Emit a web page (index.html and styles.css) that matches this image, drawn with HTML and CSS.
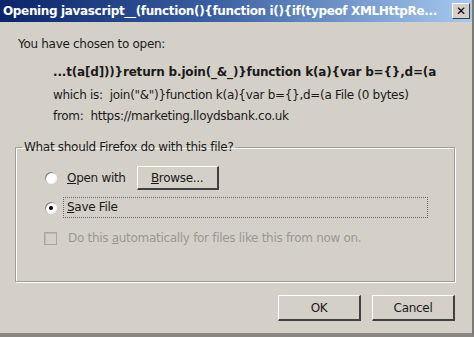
FILE: index.html
```html
<!DOCTYPE html>
<html>
<head>
<meta charset="utf-8">
<link rel="stylesheet" href="styles.css">
</head>
<body>
<div class="window">
  <div class="titlebar">
    <span class="title">Opening javascript__(function(){function i(){if(typeof XMLHttpRe...</span>
    <span class="close">✕</span>
  </div>
  <div class="content">
    <div class="intro">You have chosen to open:</div>
    <div class="fileinfo">
      <div class="filename">...t(a[d]))}return b.join(_&amp;_)}function k(a){var b={},d=(a</div>
      <div class="meta">which is:&nbsp; join("&amp;")}function k(a){var b={},d=(a File (0 bytes)</div>
      <div class="meta">from:&nbsp; https://marketing.lloydsbank.co.uk</div>
    </div>
    <fieldset class="group">
      <legend>What should Firefox do with this file?</legend>
      <div class="option">
        <span class="radio"></span>
        <span class="label"><u>O</u>pen with</span>
        <span class="btn browse"><u>B</u>rowse...</span>
      </div>
      <div class="option">
        <span class="radio checked"></span>
        <span class="label focus"><u>S</u>ave File</span>
      </div>
      <div class="option auto">
        <span class="check"></span>
        <span class="label disabled">Do this <u>a</u>utomatically for files like this from now on.</span>
      </div>
    </fieldset>
    <div class="actions">
      <span class="btn">OK</span>
      <span class="btn">Cancel</span>
    </div>
  </div>
</div>
</body>
</html>
```

FILE: styles.css
```css
html, body {
  margin: 0;
  padding: 0;
  background: #d4d0c8;
}
.window {
  width: 472px;
  height: 333px;
  background: #d4d0c8;
  border-right: 2px solid #7c7a76;
  border-bottom: 4px solid #8a8783;
  font-family: "DejaVu Sans", sans-serif;
  font-size: 12px;
  letter-spacing: -0.3px;
  color: #1a1a1a;
  display: flex;
  flex-direction: column;
}
.titlebar {
  height: 22px;
  background: linear-gradient(to right, #0a246a, #3a5fa0 45%, #a6caf0);
  display: flex;
  align-items: center;
  padding: 0 2px 0 3px;
  gap: 6px;
}
.title {
  flex: 1;
  min-width: 0;
  overflow: hidden;
  color: #fff;
  font-weight: bold;
  font-size: 12px;
  letter-spacing: -0.35px;
  white-space: nowrap;
}
.close {
  flex: none;
  width: 16px;
  height: 14px;
  background: #d4d0c8;
  border-top: 1px solid #fff;
  border-left: 1px solid #fff;
  border-right: 1px solid #404040;
  border-bottom: 1px solid #404040;
  display: flex;
  align-items: center;
  justify-content: center;
  font-size: 12px;
  font-weight: bold;
  color: #000;
  letter-spacing: 0;
}
.content {
  padding: 14px 17px 0 15px;
  display: flex;
  flex-direction: column;
}
.intro {
  padding-left: 3px;
  line-height: 16px;
}
.fileinfo {
  padding-left: 38px;
  margin-top: 12px;
}
.filename {
  font-weight: bold;
  font-size: 12px;
  line-height: 16px;
  letter-spacing: -0.18px;
  white-space: nowrap;
}
.meta {
  line-height: 21px;
  white-space: nowrap;
}
.filename + .meta {
  margin-top: 5px;
}
.group {
  margin: 13px 0 0 0;
  padding: 12px 0 12px 0;
  border: 1px solid #a09d98;
  box-shadow: 1px 1px 0 #fff, inset 1px 1px 0 #fff;
  height: 142px;
  box-sizing: border-box;
}
.group legend {
  padding: 0 2px;
  margin-left: 6px;
  line-height: 14px;
}
.option {
  display: flex;
  align-items: center;
  padding-left: 29px;
}
.option + .option {
  margin-top: 7px;
}
.radio {
  width: 12px;
  height: 12px;
  border-radius: 50%;
  background: #fff;
  box-shadow: inset 1px 1px 0 #808080, inset -1px -1px 0 #f0f0f0;
  position: relative;
  flex: none;
}
.radio.checked::after {
  content: "";
  position: absolute;
  left: 4px;
  top: 4px;
  width: 4px;
  height: 4px;
  border-radius: 50%;
  background: #000;
}
.label {
  margin-left: 8px;
  line-height: 17px;
  padding: 0 2px;
}
.label.focus {
  flex: 1;
  margin-left: 6px;
  margin-right: 26px;
  border: 1px dotted #6b6b6b;
  padding: 1px 3px;
}
.check {
  width: 11px;
  height: 11px;
  border: 1px solid #a8a5a0;
  box-shadow: inset 1px 1px 0 #bdbab5;
  flex: none;
  margin-left: -1px;
}
.option.auto {
  margin-top: 12px;
}
.label.disabled {
  color: #9a9893;
  margin-left: 9px;
}
.btn {
  display: inline-flex;
  align-items: center;
  justify-content: center;
  height: 24px;
  background: #d4d0c8;
  border-top: 1px solid #fff;
  border-left: 1px solid #fff;
  border-right: 2px solid #404040;
  border-bottom: 2px solid #404040;
  box-sizing: border-box;
}
.browse {
  width: 82px;
  margin-left: 9px;
}
.actions {
  display: flex;
  justify-content: flex-end;
  gap: 11px;
  margin-top: 13px;
}
.actions .btn {
  width: 83px;
  height: 26px;
}
```
